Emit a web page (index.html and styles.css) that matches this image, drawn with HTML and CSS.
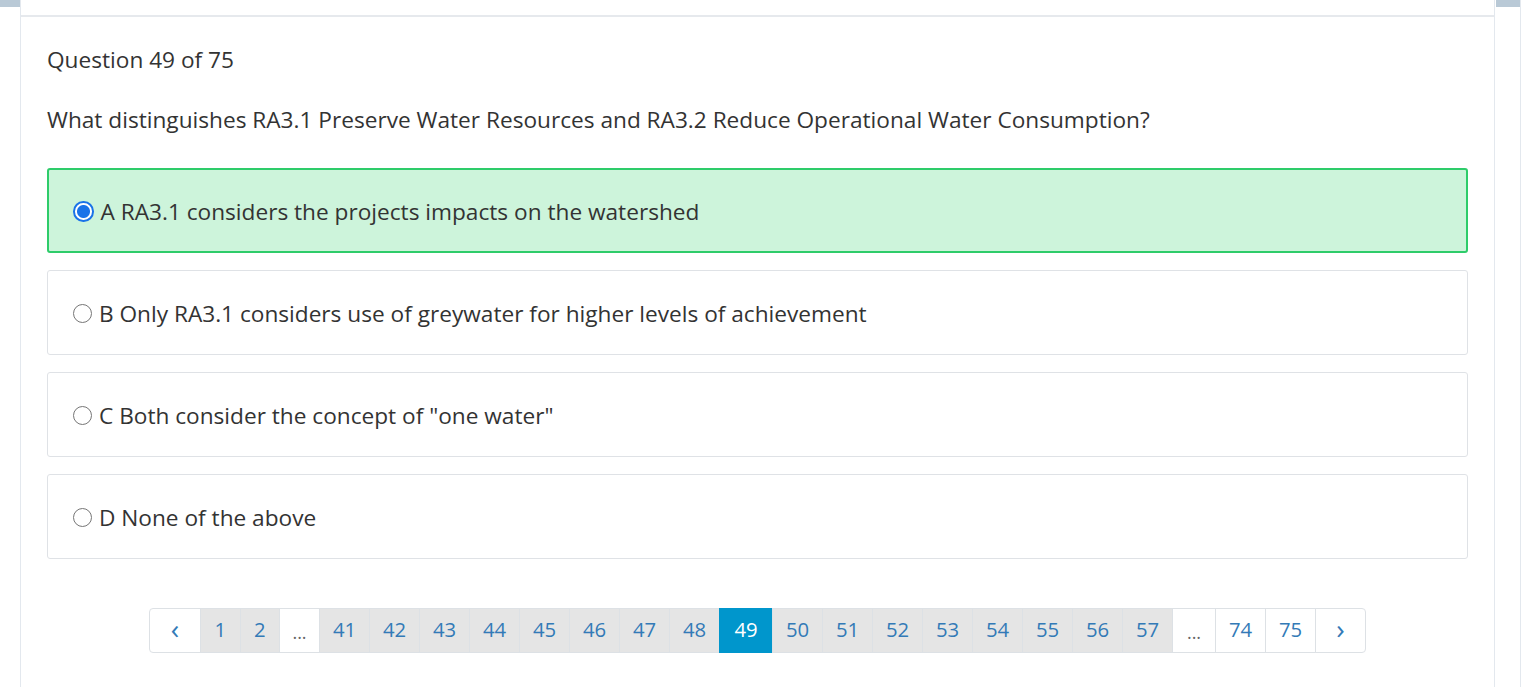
FILE: index.html
```html
<!DOCTYPE html>
<html lang="en">
<head>
<meta charset="utf-8">
<title>Question 49 of 75</title>
<link rel="stylesheet" href="styles.css">
</head>
<body>
<div class="frame">
  <div class="gutter gutter-left"><div class="tab"></div></div>
  <main class="card">
    <div class="card-head"></div>
    <div class="card-body">
      <p class="counter">Question 49 of 75</p>
      <p class="question">What distinguishes RA3.1 Preserve Water Resources and RA3.2 Reduce Operational Water Consumption?</p>
      <div class="options">
        <label class="option selected"><span class="radio checked"></span>A RA3.1 considers the projects impacts on the watershed</label>
        <label class="option"><span class="radio"></span>B Only RA3.1 considers use of greywater for higher levels of achievement</label>
        <label class="option"><span class="radio"></span>C Both consider the concept of "one water"</label>
        <label class="option"><span class="radio"></span>D None of the above</label>
      </div>
      <nav class="pager">
        <a class="pg white arrow">&lsaquo;</a>
        <a class="pg one">1</a>
        <a class="pg one">2</a>
        <a class="pg white dots">...</a>
        <a class="pg">41</a>
        <a class="pg">42</a>
        <a class="pg">43</a>
        <a class="pg">44</a>
        <a class="pg">45</a>
        <a class="pg">46</a>
        <a class="pg">47</a>
        <a class="pg">48</a>
        <a class="pg active">49</a>
        <a class="pg">50</a>
        <a class="pg">51</a>
        <a class="pg">52</a>
        <a class="pg">53</a>
        <a class="pg">54</a>
        <a class="pg">55</a>
        <a class="pg">56</a>
        <a class="pg">57</a>
        <a class="pg white dots wide">...</a>
        <a class="pg white">74</a>
        <a class="pg white">75</a>
        <a class="pg white arrow">&rsaquo;</a>
      </nav>
    </div>
  </main>
  <div class="gutter gutter-right"><div class="tab"></div></div>
  <div class="edge"></div>
</div>
</body>
</html>
```
FILE: styles.css
```css
html, body {
  margin: 0;
  padding: 0;
  background: #ffffff;
  height: 100%;
  overflow: hidden;
}
body {
  font-family: "Open Sans", "Noto Sans", sans-serif;
  color: #333333;
}
.frame {
  display: grid;
  grid-template-columns: 20px 1475px 25px 3px;
  min-height: 687px;
}
.gutter .tab {
  height: 7px;
  background: #b9c9d6;
}
.gutter-right .tab {
  margin-left: 1px;
}
.card {
  border-left: 1px solid #e3e8ee;
  border-right: 1px solid #e3e8ee;
  background: #fff;
}
.edge {
  border-left: 1px solid #e3e8ee;
}
.card-head {
  height: 15px;
  border-bottom: 2px solid #e6e9ed;
}
.card-body {
  padding: 0 26px 0 26px;
}
.counter {
  margin: 28px 0 0;
  font-size: 22.65px;
  line-height: 30px;
}
.question {
  margin: 30px 0 0;
  font-size: 22.65px;
  line-height: 30px;
}
.options {
  margin-top: 33px;
  display: flex;
  flex-direction: column;
  gap: 17px;
}
.option {
  display: flex;
  align-items: center;
  height: 85px;
  box-sizing: border-box;
  border: 1px solid #dfe2e6;
  border-radius: 3px;
  padding-left: 25px;
  padding-top: 2px;
  font-size: 22.65px;
  background: #fff;
}
.option.selected {
  background: #cdf4db;
  border: 2px solid #2ecc6a;
  padding-left: 24px;
}
.radio {
  width: 17px;
  height: 17px;
  border-radius: 50%;
  border: 1.5px solid #767676;
  margin-right: 7px;
  flex: none;
  box-sizing: content-box;
  background: #fff;
}
.radio.checked {
  border: 2px solid #1a73e8;
  width: 16.5px;
  height: 16.5px;
  background: radial-gradient(circle, #1a73e8 0 6px, #fff 7px);
}
.pager {
  display: flex;
  justify-content: center;
  margin-top: 49px;
}
.pg {
  display: flex;
  align-items: center;
  justify-content: center;
  height: 45px;
  box-sizing: border-box;
  width: 51px;
  padding-bottom: 3px;
  font-size: 20.3px;
  color: #337ab7;
  background: #e5e5e5;
  border: 1px solid #dde1e5;
  margin-left: -1px;
}
.pg:first-child {
  border-radius: 4px 0 0 4px;
  margin-left: 0;
  width: 52px;
}
.pg:last-child {
  border-radius: 0 4px 4px 0;
}
.pg.one {
  width: 40.5px;
}
.pg.white {
  background: #fff;
}
.pg.dots {
  color: #666;
  font-size: 18px;
  width: 41px;
  padding-top: 2px;
  padding-bottom: 0;
}
.pg.dots.wide {
  width: 44px;
}
.pg.arrow {
  font-size: 28px;
  padding-bottom: 5px;
}
.pg.active {
  background: #0096cc;
  border-color: #0096cc;
  color: #fff;
  width: 54px;
}
```
